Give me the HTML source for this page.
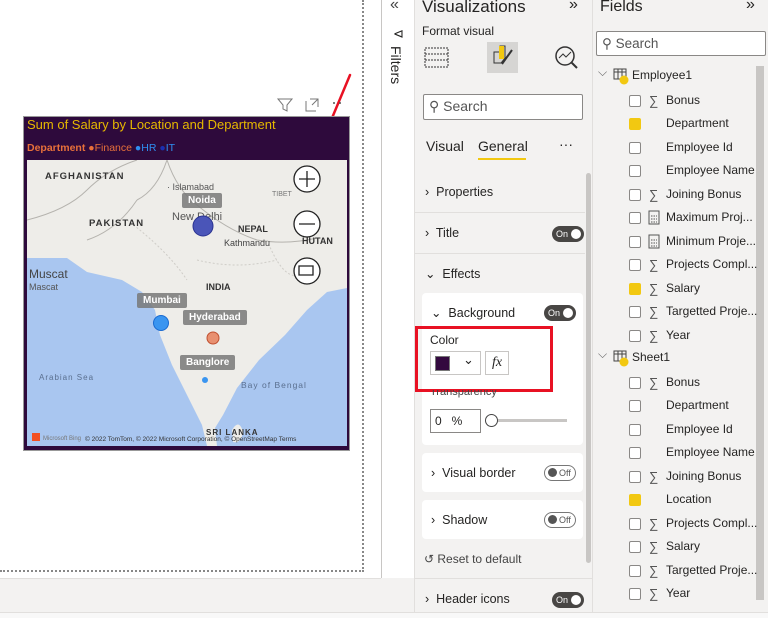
<!DOCTYPE html>
<html><head><meta charset="utf-8"><style>
*{margin:0;padding:0;box-sizing:border-box}
body{width:768px;height:618px;overflow:hidden;background:#f3f2f1;font-family:"Liberation Sans","Segoe UI",sans-serif;color:#252423;position:relative}
.a{position:absolute}
.t{position:absolute;white-space:nowrap}
.cb{position:absolute;width:12px;height:12px;border:1px solid #8a8886;border-radius:2px;background:#fff}
.cb.on{background:#f2c811;border-color:#f2c811}
.sig{position:absolute;font-size:13px;color:#555}
.tog{position:absolute;width:32px;height:16px;border-radius:8px;background:#484644;color:#fff;font-size:9px;padding-left:4px;line-height:16px}
.tog:after{content:"";position:absolute;right:3px;top:3px;width:10px;height:10px;border-radius:50%;background:#fff}
.off{position:absolute;width:32px;height:16px;border-radius:8px;border:1px solid #777;background:#fff;color:#555;font-size:9px;padding-left:14px;line-height:14px}
.off:before{content:"";position:absolute;left:3px;top:2px;width:9px;height:9px;border-radius:50%;background:#555}
.card{position:absolute;background:#fff;border-radius:4px}
.lbl{position:absolute;background:rgba(120,120,120,.85);color:#fff;font-size:10px;font-weight:bold;padding:2px 6px;border-radius:2px}
</style></head><body>
<div class="a" style="left:0;top:0;width:381px;height:578px;background:#fff"></div>
<div class="a" style="left:0;top:0;width:364px;height:572px;border-right:2px dotted #888;border-bottom:2px dotted #888"></div>
<div class="a" style="left:0;top:578px;width:381px;height:1px;background:#e1dfdd"></div>
<div class="a" style="left:0;top:612px;width:768px;height:1px;background:#e1dfdd"></div>
<div class="a" style="left:0;top:613px;width:768px;height:5px;background:#f8f8f8"></div>
<svg class="a" style="left:300px;top:70px" width="60" height="80"><path d="M50 5 L22 72 M22 72 L14 54 M22 72 L44 60" stroke="#e81123" stroke-width="2.5" fill="none" stroke-linecap="round"/></svg>
<svg class="a" style="left:276px;top:97px" width="80" height="16"><path d="M2 2h14l-5 6v6l-4-2v-4z" fill="none" stroke="#777"/><path d="M30 4v10h10M34 2h8v8M36 8l6-6" fill="none" stroke="#777"/><circle cx="58" cy="6" r="1" fill="#555"/><circle cx="64" cy="6" r="1" fill="#555"/></svg>
<div class="a" style="left:23px;top:116px;width:327px;height:335px;background:#2e0a3c;border:1px solid #999"></div>
<div class="t" style="left:27px;top:117px;font-size:13px;color:#e6b800">Sum of Salary by Location and Department</div>
<div class="t" style="left:27px;top:142px;font-size:10.5px;color:#e8703a"><b>Department</b> <span style="color:#e8703a">●</span>Finance <span style="color:#2e8ef0">●</span><span style="color:#2e8ef0">HR</span> <span style="color:#1a2fb0">●</span><span style="color:#2e8ef0">IT</span></div>
<svg class="a" style="left:27px;top:160px" width="320" height="286">
<rect width="320" height="286" fill="#eeede9"/>
<path d="M0 98 L40 98 L60 112 L95 120 L115 132 L128 150 L133 175 L145 205 L160 235 L175 265 L180 286 L0 286Z" fill="#a9c6f0"/>
<path d="M190 286 L188 268 L196 255 L210 228 L232 200 L258 175 L280 150 L300 132 L320 128 L320 286Z" fill="#a9c6f0"/>
<path d="M205 270 Q212 258 216 272 Q214 284 206 282Z" fill="#eeede9"/>
<path d="M0 60 Q40 50 60 30 T110 0 M60 80 Q90 70 110 40 M140 0 Q150 30 170 45 Q200 70 230 80 Q260 85 290 78 M110 40 Q130 30 140 0" stroke="#b5b3ae" fill="none" stroke-width="1"/>
<path d="M100 60 Q140 90 160 120 M170 100 Q210 110 250 100 M240 80 Q260 130 280 110" stroke="#cfcdc8" fill="none" stroke-dasharray="2 2"/>
<text x="18" y="19" font-size="9.5" font-weight="bold" fill="#333" letter-spacing="1">AFGHANISTAN</text>
<text x="62" y="66" font-size="9.5" font-weight="bold" fill="#333" letter-spacing="1">PAKISTAN</text>
<text x="140" y="30" font-size="9" fill="#555">· Islamabad</text>
<text x="245" y="36" font-size="7" fill="#777">TIBET</text>
<text x="145" y="60" font-size="11" fill="#555">New Delhi</text>
<text x="211" y="72" font-size="9" font-weight="bold" fill="#333">NEPAL</text>
<text x="197" y="86" font-size="9" fill="#444">Kathmandu</text>
<text x="275" y="84" font-size="9" font-weight="bold" fill="#333">HUTAN</text>
<text x="2" y="118" font-size="12" fill="#444">Muscat</text>
<text x="2" y="130" font-size="9" fill="#555">Mascat</text>
<text x="179" y="130" font-size="9" font-weight="bold" fill="#333">INDIA</text>
<text x="12" y="220" font-size="8" fill="#5a6f8f" letter-spacing="1">Arabian Sea</text>
<text x="214" y="228" font-size="8.5" fill="#5a6f8f" letter-spacing="1">Bay of Bengal</text>
<text x="179" y="275" font-size="8" font-weight="bold" fill="#333" letter-spacing="1">SRI LANKA</text>
<circle cx="176" cy="66" r="10" fill="#4a55b8" stroke="#2a3290"/>
<circle cx="134" cy="163" r="7.5" fill="#3a95f0" stroke="#1a6ad0"/>
<circle cx="186" cy="178" r="6" fill="#e89070" stroke="#c05030"/>
<circle cx="178" cy="220" r="3" fill="#3a95f0"/>
<g fill="#fff" stroke="#222" stroke-width="1.3"><circle cx="280" cy="19" r="13"/><circle cx="280" cy="64" r="13"/><circle cx="280" cy="111" r="13"/></g>
<path d="M272 19h16M280 11v16M272 64h16M272 106h14v9h-14z" stroke="#222" stroke-width="1.3" fill="none"/>
<rect x="5" y="273" width="8" height="8" fill="#f25022"/>
<text x="16" y="280" font-size="6" fill="#777">Microsoft Bing</text>
<text x="58" y="281" font-size="6.5" fill="#333">© 2022 TomTom, © 2022 Microsoft Corporation, © OpenStreetMap  Terms</text>
</svg>
<div class="lbl" style="left:182px;top:193px">Noida</div>
<div class="lbl" style="left:137px;top:293px">Mumbai</div>
<div class="lbl" style="left:183px;top:310px">Hyderabad</div>
<div class="lbl" style="left:180px;top:355px">Banglore</div>
<div class="a" style="left:381px;top:0;width:1px;height:578px;background:#c8c6c4"></div>
<div class="a" style="left:382px;top:0;width:32px;height:578px;background:#fff"></div>
<div class="a" style="left:414px;top:0;width:1px;height:612px;background:#e1dfdd"></div>
<div class="t" style="left:390px;top:-4px;font-size:16px;color:#444">«</div>
<div class="t" style="left:393px;top:26px;font-size:13px">⊲</div>
<div class="t" style="left:388px;top:46px;font-size:14px;writing-mode:vertical-rl">Filters</div>
<div class="t" style="left:422px;top:-3px;font-size:17px">Visualizations</div>
<div class="t" style="left:569px;top:-4px;font-size:16px">»</div>
<div class="t" style="left:422px;top:24px;font-size:12px">Format visual</div>
<svg class="a" style="left:424px;top:46px" width="26" height="24"><rect x="1" y="2" width="23" height="19" fill="none" stroke="#333" stroke-dasharray="2 1"/><path d="M1 8h23M1 14h23" stroke="#333" stroke-dasharray="2 1"/></svg>
<div class="a" style="left:487px;top:42px;width:31px;height:31px;background:#d6d5d3"></div>
<svg class="a" style="left:490px;top:44px" width="26" height="26"><path d="M4 8h6v-6h5v12l-4 5H4z" fill="none" stroke="#333"/><rect x="9" y="2" width="5" height="13" fill="#f2c811"/><path d="M22 6l-10 14" stroke="#333" stroke-width="2"/></svg>
<svg class="a" style="left:554px;top:45px" width="26" height="26"><circle cx="11" cy="11" r="9" fill="none" stroke="#333" stroke-width="1.5"/><path d="M17 17l6 6" stroke="#333" stroke-width="2"/><path d="M5 13l4-4 3 3 5-5" stroke="#333" fill="none"/></svg>
<div class="a" style="left:423px;top:94px;width:160px;height:26px;background:#fff;border:1px solid #8a8886;border-radius:2px"></div>
<div class="t" style="left:429px;top:98px;font-size:14px;color:#555">⚲ Search</div>
<div class="t" style="left:426px;top:138px;font-size:14px">Visual</div>
<div class="t" style="left:478px;top:138px;font-size:14px">General</div>
<div class="a" style="left:478px;top:158px;width:48px;height:2px;background:#f2c811"></div>
<div class="t" style="left:559px;top:136px;font-size:14px">···</div>
<div class="a" style="left:586px;top:173px;width:5px;height:390px;background:#c8c6c4;border-radius:3px"></div>
<div class="t" style="left:425px;top:185px;font-size:12.5px">›&nbsp; Properties</div>
<div class="a" style="left:415px;top:212px;width:170px;height:1px;background:#e1dfdd"></div>
<div class="t" style="left:425px;top:226px;font-size:12.5px">›&nbsp; Title</div>
<div class="tog" style="left:552px;top:226px">On</div>
<div class="a" style="left:415px;top:253px;width:170px;height:1px;background:#e1dfdd"></div>
<div class="t" style="left:425px;top:266px;font-size:12.5px">⌄&nbsp; Effects</div>
<div class="card" style="left:422px;top:293px;width:161px;height:152px"></div>
<div class="t" style="left:431px;top:305px;font-size:12.5px">⌄&nbsp; Background</div>
<div class="tog" style="left:544px;top:305px">On</div>
<div class="t" style="left:430px;top:333px;font-size:12px">Color</div>
<div class="a" style="left:430px;top:351px;width:51px;height:24px;border:1px solid #c8c6c4;background:#fff"></div>
<div class="a" style="left:435px;top:356px;width:15px;height:15px;background:#33093f;border:1px solid #777"></div>
<div class="t" style="left:463px;top:352px;font-size:13px">⌄</div>
<div class="a" style="left:485px;top:351px;width:24px;height:24px;border:1px solid #c8c6c4;background:#fff;font-family:'Liberation Serif',serif;font-style:italic;font-size:14px;text-align:center;line-height:22px">fx</div>
<div class="a" style="left:415px;top:326px;width:138px;height:66px;border:3px solid #e81123"></div>
<div class="t" style="left:430px;top:386px;font-size:11px;color:#444;clip-path:inset(4px 0 0 0)">Transparency</div>
<div class="a" style="left:430px;top:409px;width:51px;height:24px;border:1px solid #8a8886;background:#fff;font-size:12px;padding:4px 4px">0 &nbsp;&nbsp;%</div>
<div class="a" style="left:492px;top:419px;width:75px;height:3px;background:#c8c6c4"></div>
<div class="a" style="left:485px;top:414px;width:13px;height:13px;border-radius:50%;border:1.5px solid #444;background:#fff"></div>
<div class="card" style="left:422px;top:453px;width:161px;height:39px"></div>
<div class="t" style="left:431px;top:466px;font-size:12.5px">›&nbsp; Visual border</div>
<div class="off" style="left:544px;top:465px">Off</div>
<div class="card" style="left:422px;top:500px;width:161px;height:39px"></div>
<div class="t" style="left:431px;top:513px;font-size:12.5px">›&nbsp; Shadow</div>
<div class="off" style="left:544px;top:512px">Off</div>
<div class="t" style="left:424px;top:552px;font-size:12px;color:#444">↺ Reset to default</div>
<div class="a" style="left:415px;top:578px;width:177px;height:1px;background:#e1dfdd"></div>
<div class="t" style="left:425px;top:592px;font-size:12.5px">›&nbsp; Header icons</div>
<div class="tog" style="left:552px;top:592px">On</div>
<div class="a" style="left:592px;top:0;width:1px;height:612px;background:#e1dfdd"></div>
<div class="t" style="left:600px;top:-2px;font-size:16px">Fields</div>
<div class="t" style="left:746px;top:-4px;font-size:16px">»</div>
<div class="a" style="left:596px;top:31px;width:170px;height:25px;background:#fff;border:1px solid #8a8886;border-radius:2px"></div>
<div class="t" style="left:602px;top:36px;font-size:13.5px;color:#555">⚲ Search</div>
<div class="a" style="left:756px;top:66px;width:8px;height:534px;background:#c8c6c4"></div>
<div id="f"></div>
<script>
var rows=[["h","Employee1"],["s","Bonus"],["c","Department",1],["","Employee Id"],["","Employee Name"],["s","Joining Bonus"],["k","Maximum Proj..."],["k","Minimum Proje..."],["s","Projects Compl..."],["s","Salary",1],["s","Targetted Proje..."],["s","Year"],["h","Sheet1"],["s","Bonus"],["","Department"],["","Employee Id"],["","Employee Name"],["s","Joining Bonus"],["c","Location",1],["s","Projects Compl..."],["s","Salary"],["s","Targetted Proje..."],["s","Year"]];
var h="";rows.forEach(function(r,i){var y=67+i*23.5;
if(r[0]=="h"){h+='<div class="t" style="left:598px;top:'+(y-2)+'px;font-size:12px;color:#666">⌵</div><svg class="a" style="left:613px;top:'+(y+1)+'px" width="20" height="20"><rect x="1" y="1" width="12" height="10" fill="none" stroke="#444"/><path d="M1 4h12M5 1v10M9 1v10" stroke="#444"/><circle cx="11" cy="12" r="4.5" fill="#f2c811"/></svg><div class="t" style="left:632px;top:'+(y+1)+'px;font-size:12px">'+r[1]+'</div>';}
else{h+='<div class="cb'+(r[2]?' on':'')+'" style="left:629px;top:'+(y+4)+'px"></div>';
if(r[0]=="s")h+='<div class="sig" style="left:649px;top:'+(y+2)+'px">∑</div>';
if(r[0]=="k")h+='<svg class="a" style="left:648px;top:'+(y+2)+'px" width="12" height="15"><rect x="1" y="1" width="10" height="13" fill="none" stroke="#555"/><path d="M3 6h6M3 9h6M3 12h6" stroke="#555" stroke-dasharray="1.5 1"/></svg>';
h+='<div class="t" style="left:666px;top:'+(y+2)+'px;font-size:12px">'+r[1]+'</div>';}});
document.getElementById("f").innerHTML=h;
</script>
</body></html>
